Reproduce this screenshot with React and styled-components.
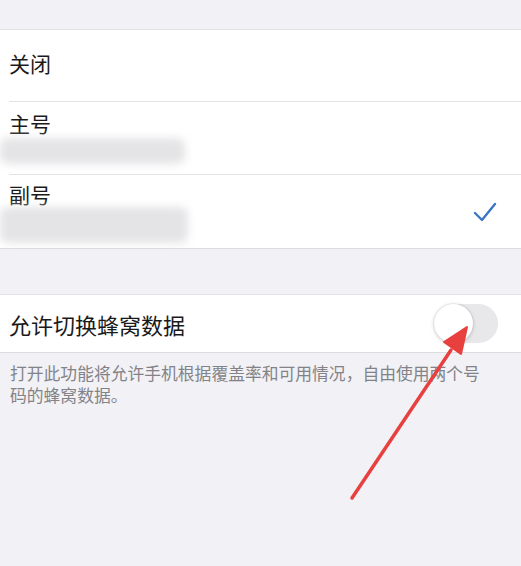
import styled, { createGlobalStyle } from "styled-components";

const Global = createGlobalStyle`
  html, body { margin: 0; padding: 0; background: #f1f1f6; }
  body { font-family: "Noto Sans CJK SC", "Noto Sans", sans-serif; }
`;

const Page = styled.div`
  position: relative;
  width: 521px;
  height: 566px;
  overflow: hidden;
  background: #f1f1f6;
  padding-top: 29px;
  box-sizing: border-box;
`;

const Group = styled.div`
  background: #fff;
  border-top: 1px solid #e2e2e6;
  border-bottom: 1px solid #dcdce0;
  margin-bottom: ${(p) => p.$gap || 0}px;
`;

const Row = styled.div`
  display: flex;
  align-items: center;
  justify-content: space-between;
  height: ${(p) => p.$h}px;
  margin-left: 9px;
  padding-right: 24px;
  padding-bottom: ${(p) => p.$pb || 0}px;
  box-sizing: border-box;
  border-bottom: ${(p) => (p.$last ? "none" : "1px solid #e4e4e8")};
`;

const LabelCol = styled.div`
  display: flex;
  flex-direction: column;
  gap: ${(p) => p.$gap}px;
  padding-bottom: ${(p) => p.$pb || 0}px;
`;

const Label = styled.div`
  font-size: ${(p) => p.$size || 21}px;
  color: #1a1a1a;
  line-height: 26px;
`;

const Blur = styled.div`
  width: ${(p) => p.$w}px;
  height: ${(p) => p.$hh}px;
  margin-left: -9px;
  background: #e4e4e6;
  filter: blur(4px);
  border-radius: 8px;
`;

const Check = styled.svg`
  width: 24px;
  height: 20px;
`;

const Toggle = styled.div`
  width: 64px;
  height: 39px;
  border-radius: 20px;
  background: #e8e8ea;
  margin-right: -1px;
  position: relative;
`;

const Knob = styled.div`
  position: absolute;
  left: 0;
  top: 0;
  width: 39px;
  height: 39px;
  border-radius: 50%;
  background: #fff;
  box-shadow: 0 1px 4px rgba(0, 0, 0, 0.18), 0 0 0 1px rgba(0, 0, 0, 0.05);
`;

const Footer = styled.p`
  margin: 0;
  padding: 9px 28px 0 10px;
  font-size: 16.8px;
  line-height: 22px;
  color: #838387;
`;

const Arrow = styled.svg`
  position: absolute;
  left: 0;
  top: 0;
  width: 521px;
  height: 566px;
  pointer-events: none;
`;

export default function App() {
  return (
    <Page>
      <Global />
      <Group $gap={45}>
        <Row $h={72} $pb={5}>
          <Label>关闭</Label>
        </Row>
        <Row $h={73}>
          <LabelCol $gap={2} $pb={2}>
            <Label>主号</Label>
            <Blur $w={185} $hh={26} />
          </LabelCol>
        </Row>
        <Row $h={73} $last>
          <LabelCol $gap={0}>
            <Label>副号</Label>
            <Blur $w={188} $hh={36} />
          </LabelCol>
          <Check viewBox="0 0 24 20">
            <path d="M2 11 L9 18 L22 2" fill="none" stroke="#3b77c6" strokeWidth="2.4" strokeLinecap="round" strokeLinejoin="round" />
          </Check>
        </Row>
      </Group>
      <Group>
        <Row $h={57} $last>
          <Label $size={22}>允许切换蜂窝数据</Label>
          <Toggle>
            <Knob />
          </Toggle>
        </Row>
      </Group>
      <Footer>打开此功能将允许手机根据覆盖率和可用情况，自由使用两个号码的蜂窝数据。</Footer>
      <Arrow viewBox="0 0 521 566">
        <path d="M352 498 L451 350" stroke="#e8403e" strokeWidth="3.5" strokeLinecap="round" fill="none" />
        <path d="M467 327 L444 342 L461 354 Z" fill="#e8403e" stroke="#e8403e" strokeWidth="2" strokeLinejoin="round" />
      </Arrow>
    </Page>
  );
}
